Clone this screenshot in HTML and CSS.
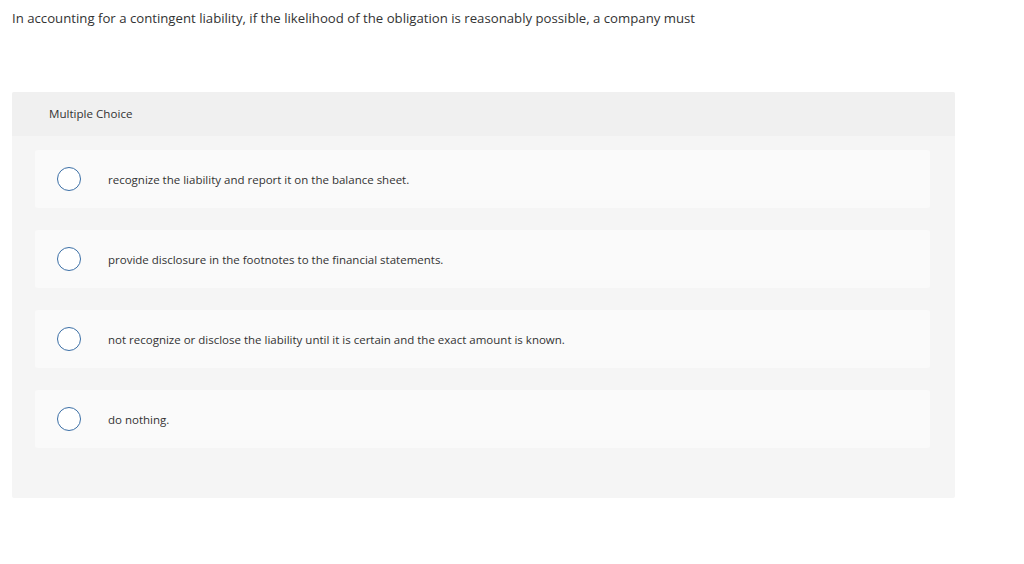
FILE: index.html
```html
<!DOCTYPE html>
<html>
<head>
<meta charset="utf-8">
<link rel="stylesheet" href="styles.css">
</head>
<body>
<p class="question">In accounting for a contingent liability, if the likelihood of the obligation is reasonably possible, a company must</p>
<div class="panel">
  <div class="panel-head">Multiple Choice</div>
  <div class="panel-body">
    <div class="option"><span class="radio"></span><span class="label">recognize the liability and report it on the balance sheet.</span></div>
    <div class="option"><span class="radio"></span><span class="label">provide disclosure in the footnotes to the financial statements.</span></div>
    <div class="option"><span class="radio"></span><span class="label">not recognize or disclose the liability until it is certain and the exact amount is known.</span></div>
    <div class="option"><span class="radio"></span><span class="label">do nothing.</span></div>
  </div>
</div>
</body>
</html>
```
FILE: styles.css
```css
body {
  margin: 0;
  background: #fff;
  font-family: "Open Sans", "Lato", sans-serif;
  color: #333;
}
.question {
  margin: 0;
  padding: 9px 12px 0;
  font-size: 13.2px;
  line-height: 18px;
  height: 92px;
  box-sizing: border-box;
}
.panel {
  margin-left: 12px;
  width: 943px;
  height: 406px;
  background: #f5f5f5;
  border-radius: 2px;
  overflow: hidden;
}
.panel-head {
  height: 44px;
  background: #f0f0f0;
  padding-left: 37px;
  font-size: 11.6px;
  line-height: 44px;
  color: #333;
}
.panel-body {
  padding: 14px 25px 0 23px;
  display: flex;
  flex-direction: column;
  gap: 22px;
}
.option {
  height: 58px;
  background: #fafafa;
  border-radius: 3px;
  display: flex;
  align-items: center;
  padding-left: 22px;
}
.radio {
  width: 22px;
  height: 22px;
  border: 1.5px solid #3a6ea5;
  border-radius: 50%;
  background: #fff;
  flex: none;
}
.label {
  margin-left: 27px;
  font-size: 11.5px;
  color: #333;
}
```
